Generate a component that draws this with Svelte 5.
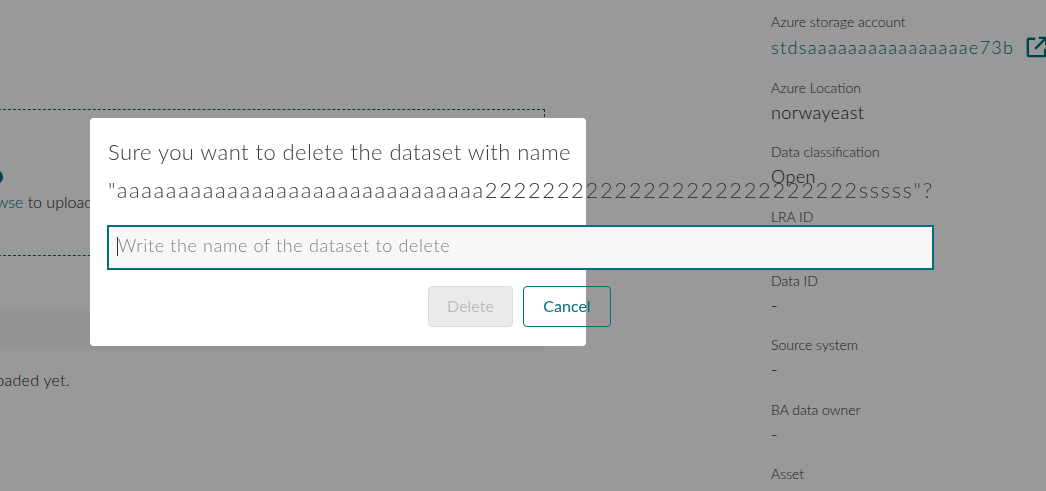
<script>
	const details = [
		{ label: 'Azure Location', value: 'norwayeast' },
		{ label: 'Data classification', value: 'Open' },
		{ label: 'LRA ID', value: '-' },
		{ label: 'Data ID', value: '-' },
		{ label: 'Source system', value: '-' },
		{ label: 'BA data owner', value: '-' },
		{ label: 'Asset', value: '-' }
	];
	const datasetName = 'aaaaaaaaaaaaaaaaaaaaaaaaaaaaaa22222222222222222222222222sssss';
	let typedName = $state('');
</script>

<div class="page">
	<section class="files">
		<div class="dropzone">
			<span class="upload-dot"></span>
			<p>Drag and drop or <span class="link">browse</span> to upload</p>
		</div>
		<div class="table-head"></div>
		<p class="empty">No files have been uploaded yet.</p>
	</section>

	<aside class="details">
		<div class="item">
			<span class="label">Azure storage account</span>
			<span class="value storage">
				stdsaaaaaaaaaaaaaaaae73b
				<svg width="22" height="22" viewBox="0 0 24 24" aria-hidden="true">
					<path d="M10 3H3a1 1 0 0 0-1 1v17a1 1 0 0 0 1 1h17a1 1 0 0 0 1-1v-7M14 2h8v8M22 2 10 14" fill="none" stroke="currentColor" stroke-width="2.6" />
				</svg>
			</span>
		</div>
		{#each details as item}
			<div class="item">
				<span class="label">{item.label}</span>
				<span class="value">{item.value}</span>
			</div>
		{/each}
	</aside>
</div>

<div class="scrim"></div>

<div class="dialog" role="dialog">
	<p class="question">Sure you want to delete the dataset with name</p>
	<p class="question name">"{datasetName}"?</p>
	<div class="field">
		<input bind:value={typedName} placeholder="Write the name of the dataset to delete" />
		<span class="caret"></span>
	</div>
	<div class="actions">
		<button class="delete" disabled>Delete</button>
		<button class="cancel">Cancel</button>
	</div>
</div>

<style>
	:global(body) {
		overflow: hidden;
		background: #fff;
	}

	.page {
		display: flex;
		gap: 226px;
		height: 491px;
		overflow: hidden;
		font-family: Lato, sans-serif;
		font-weight: 300;
		color: #1a1a1a;
	}

	.files {
		flex: 0 0 545px;
		padding-top: 109px;
	}

	.dropzone {
		box-sizing: border-box;
		height: 147px;
		width: 1146px;
		margin-left: -601px;
		border: 1px dashed #00606a;
		display: flex;
		flex-direction: column;
		align-items: center;
		padding-top: 60px;
		font-size: 16px;
	}

	.upload-dot {
		flex: none;
		width: 14px;
		height: 14px;
		margin-left: 48px;
		border-radius: 50%;
		background: #007079;
	}

	.dropzone p {
		margin: 8px 0 0;
		white-space: nowrap;
	}

	.link {
		color: #007079;
	}

	.table-head {
		height: 40px;
		margin-top: 55px;
		background: #f7f7f7;
	}

	.empty {
		margin: 19px 0 0 -164px;
		font-size: 16px;
		letter-spacing: 0.25px;
		white-space: nowrap;
	}

	.details {
		padding-top: 14px;
		display: flex;
		flex-direction: column;
		gap: 20.33px;
	}

	.item {
		display: flex;
		flex-direction: column;
		gap: 4px;
		white-space: nowrap;
	}

	.label {
		font-size: 14px;
		line-height: 16px;
		color: #333;
	}

	.value {
		font-size: 18px;
		line-height: 24px;
		letter-spacing: 0.4px;
	}

	.storage {
		display: flex;
		align-items: center;
		gap: 12px;
		height: 25.7px;
		letter-spacing: 1.35px;
		color: #007079;
	}

	.storage svg {
		flex: none;
		margin-top: 1px;
	}

	.scrim {
		position: fixed;
		inset: 0;
		background: rgba(0, 0, 0, 0.4);
	}

	.dialog {
		position: fixed;
		left: 90px;
		top: 118px;
		width: 496px;
		height: 228px;
		box-sizing: border-box;
		padding: 15px 18px;
		background: #fff;
		border-radius: 4px;
		font-family: Lato, sans-serif;
		font-weight: 300;
	}

	.question {
		margin: 0;
		font-size: 22px;
		line-height: 38px;
		letter-spacing: 0.45px;
		color: #3d3d3d;
		white-space: nowrap;
	}

	.name {
		letter-spacing: 1.62px;
	}

	.field {
		position: relative;
		width: 827px;
		margin: 16px 0 0 -1px;
	}

	.field input {
		display: block;
		box-sizing: border-box;
		width: 100%;
		height: 45px;
		padding: 0 9px 6px;
		border: 2px solid #007079;
		background: #f7f7f7;
		font: inherit;
		font-size: 18px;
		letter-spacing: 0.63px;
		outline: none;
		color: #333;
	}

	.field input::placeholder {
		color: #808080;
		opacity: 1;
	}

	.caret {
		position: absolute;
		left: 10px;
		top: 12px;
		width: 1px;
		height: 19px;
		background: #333;
	}

	.actions {
		display: flex;
		gap: 10px;
		margin-top: 16px;
		margin-left: 320px;
		width: max-content;
	}

	button {
		flex: none;
		box-sizing: border-box;
		height: 41px;
		padding-bottom: 4px;
		border-radius: 4px;
		font: inherit;
		font-weight: 400;
		font-size: 16px;
		background: transparent;
	}

	.delete {
		width: 85px;
		border: 1px solid #dcdcdc;
		background: #eaeaea;
		color: #bebebe;
	}

	.cancel {
		width: 88px;
		border: 1px solid #007079;
		color: #007079;
	}
</style>
